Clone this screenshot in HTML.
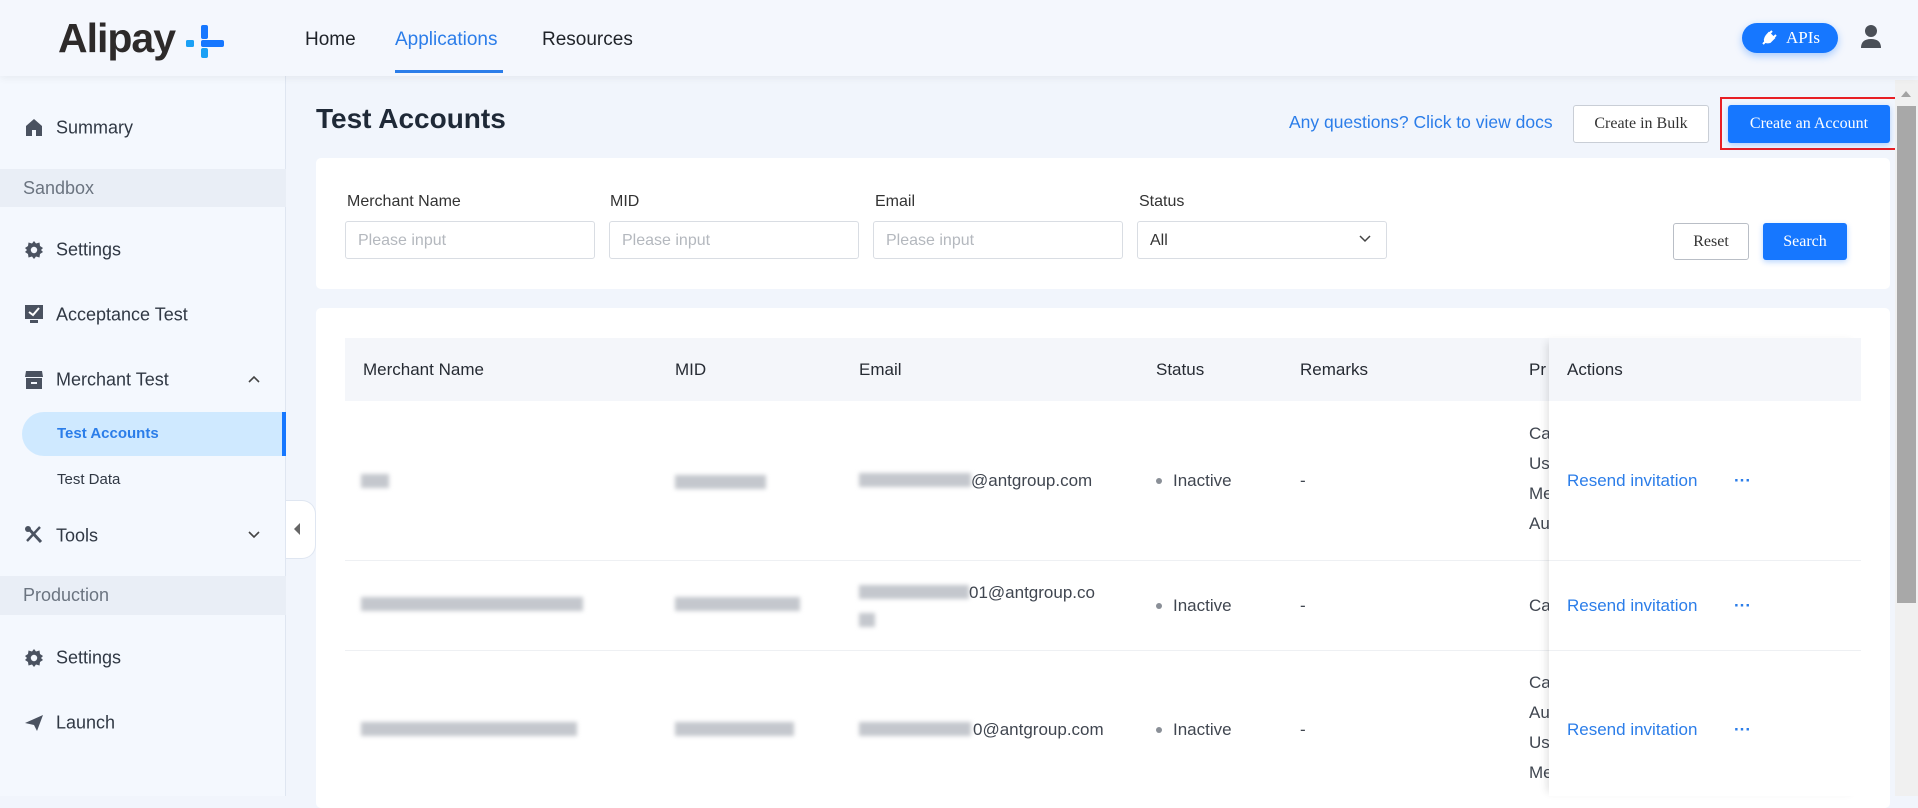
<!DOCTYPE html>
<html><head><meta charset="utf-8"><style>
*{box-sizing:border-box;margin:0;padding:0}
body{width:1918px;height:796px;overflow:hidden;background:#f1f5fc;font-family:"Liberation Sans",sans-serif;color:#262b33;position:relative}
.abs{position:absolute}
.hdr{left:0;top:0;width:1918px;height:76px;background:#f4f7fd;box-shadow:0 2px 8px rgba(0,0,0,.06);z-index:2}
.nav{top:29px;font-size:19px;color:#1f2329}
.side{left:0;top:76px;width:286px;height:720px;background:#f4f8fe;border-right:1px solid #dfe6f1}
.si{left:56px;font-size:18px;color:#303844;transform:translateY(-50%)}
.ic{left:24px;transform:translateY(-50%)}
.band{left:0;width:286px;background:#e9eef6;color:#6b7480;font-size:18px;padding-left:23px;display:flex;align-items:center}
.card{background:#fff;border-radius:5px}
.lbl{font-size:16px;color:#333;top:193px}
.inp{top:221px;height:38px;width:250px;border:1px solid #d9dde3;border-radius:3px;background:#fff;font-size:16px;color:#b4b8be;padding:10px 12px}
.btn{font-family:"Liberation Serif",serif;font-size:16px;display:flex;align-items:center;justify-content:center;border-radius:3px}
.th{top:360px;font-size:17px;color:#262b33}
.blur{background:#c4c7cd;filter:blur(2px);height:14px}
.td{font-size:17px;color:#404650;transform:translateY(-50%)}
.dot{width:6px;height:6px;border-radius:50%;background:#8a8f97}
.lk{color:#2b7de9;font-size:17px;transform:translateY(-50%)}
</style></head><body>
<div class="abs hdr">
  <div class="abs" style="left:58px;top:15px;font-size:41px;font-weight:bold;color:#2d2a2a;letter-spacing:-1px">Alipay</div>
  <svg class="abs" style="left:186px;top:24px" width="40" height="34" viewBox="0 0 40 34"><rect x="0" y="16" width="8" height="7" rx="1.5" fill="#1aa0f5"/><rect x="15" y="1" width="7" height="14" rx="2" fill="#1677ff"/><rect x="15" y="16" width="23" height="7" rx="2" fill="#1677ff"/><rect x="15" y="24" width="7" height="10" rx="2" fill="#1aa0f5"/></svg>
  <div class="abs nav" style="left:305px">Home</div>
  <div class="abs nav" style="left:395px;color:#2b7de9">Applications</div>
  <div class="abs" style="left:395px;top:70px;width:108px;height:3px;background:#2b7de9"></div>
  <div class="abs nav" style="left:542px">Resources</div>
  <div class="abs" style="left:1742px;top:23px;width:96px;height:30px;border-radius:15px;background:#1677ff;box-shadow:0 3px 8px rgba(22,119,255,.35);color:#fff;font-family:'Liberation Serif',serif;font-size:17px;display:flex;align-items:center;padding-left:44px">APIs</div>
  <svg class="abs" style="left:1760px;top:29px" width="18" height="18" viewBox="0 0 18 18"><path d="M3 15 L7 11 M9 4 L14 9 L10 13 Q6 14 5 12 Q4 9 9 4Z M12 2 L10 4 M16 6 L14 8" stroke="#fff" stroke-width="2" fill="#fff"/></svg>
  <svg class="abs" style="left:1860px;top:24px" width="22" height="26" viewBox="0 0 22 26"><circle cx="11" cy="7" r="6" fill="#4a4f57"/><path d="M1 24 Q1 15 11 15 Q21 15 21 24 Z" fill="#4a4f57"/></svg>
</div>

<div class="abs side"></div>
<svg class="abs ic" style="top:127px" width="20" height="20" viewBox="0 0 20 20"><path d="M2 9 L10 2 L18 9 V19 H12 V13 H8 V19 H2Z" fill="#4a5260"/></svg>
<div class="abs si" style="top:128px">Summary</div>
<div class="abs band" style="top:169px;height:38px">Sandbox</div>
<svg class="abs ic" style="top:250px" width="20" height="20" viewBox="0 0 20 20"><path d="M10 1 L12 3.5 L15.5 2.5 L16 6 L19 8 L17 10 L19 12 L16 14 L15.5 17.5 L12 16.5 L10 19 L8 16.5 L4.5 17.5 L4 14 L1 12 L3 10 L1 8 L4 6 L4.5 2.5 L8 3.5Z" fill="#4a5260"/><circle cx="10" cy="10" r="3.2" fill="#f4f8fe"/></svg>
<div class="abs si" style="top:250px">Settings</div>
<svg class="abs ic" style="top:314px" width="20" height="20" viewBox="0 0 20 20"><rect x="1" y="1" width="18" height="14" fill="#4a5260"/><path d="M5 8 L9 11 L15 4" stroke="#fff" stroke-width="2" fill="none"/><rect x="6" y="16" width="8" height="3" fill="#4a5260"/></svg>
<div class="abs si" style="top:315px">Acceptance Test</div>
<svg class="abs ic" style="top:380px" width="20" height="20" viewBox="0 0 20 20"><path d="M2 1 H18 L19 7 H1Z" fill="#4a5260"/><rect x="2" y="8" width="16" height="11" fill="#4a5260"/><rect x="7" y="12" width="6" height="2" fill="#f4f8fe"/></svg>
<div class="abs si" style="top:380px">Merchant Test</div>
<svg class="abs" style="left:247px;top:374px" width="14" height="10" viewBox="0 0 14 10"><path d="M2 8 L7 3 L12 8" stroke="#444" stroke-width="1.6" fill="none"/></svg>
<div class="abs" style="left:22px;top:412px;width:264px;height:44px;background:#cfe9ff;border-radius:22px 0 0 22px"></div>
<div class="abs" style="left:282px;top:412px;width:4px;height:44px;background:#1677ff"></div>
<div class="abs" style="left:57px;top:425px;font-size:15px;color:#2b7de9;font-weight:bold">Test Accounts</div>
<div class="abs" style="left:57px;top:471px;font-size:15px;color:#303844">Test Data</div>
<svg class="abs ic" style="top:535px" width="20" height="20" viewBox="0 0 20 20"><path d="M4 3 L17 17" stroke="#4a5260" stroke-width="3"/><path d="M16 2 L3 16" stroke="#4a5260" stroke-width="2.4"/><circle cx="4" cy="4" r="3" fill="#4a5260"/></svg>
<div class="abs si" style="top:536px">Tools</div>
<svg class="abs" style="left:247px;top:530px" width="14" height="10" viewBox="0 0 14 10"><path d="M2 2 L7 7 L12 2" stroke="#444" stroke-width="1.6" fill="none"/></svg>
<div class="abs band" style="top:576px;height:39px">Production</div>
<svg class="abs ic" style="top:658px" width="20" height="20" viewBox="0 0 20 20"><path d="M10 1 L12 3.5 L15.5 2.5 L16 6 L19 8 L17 10 L19 12 L16 14 L15.5 17.5 L12 16.5 L10 19 L8 16.5 L4.5 17.5 L4 14 L1 12 L3 10 L1 8 L4 6 L4.5 2.5 L8 3.5Z" fill="#4a5260"/><circle cx="10" cy="10" r="3.2" fill="#f4f8fe"/></svg>
<div class="abs si" style="top:658px">Settings</div>
<svg class="abs ic" style="top:723px" width="20" height="20" viewBox="0 0 20 20"><path d="M1 10 L19 2 L13 18 L10 12Z" fill="#4a5260"/></svg>
<div class="abs si" style="top:723px">Launch</div>
<div class="abs" style="left:286px;top:500px;width:30px;height:59px;background:#fff;border:1px solid #dfe6f1;border-left:none;border-radius:0 14px 14px 0"></div>
<svg class="abs" style="left:293px;top:522px" width="8" height="14" viewBox="0 0 8 14"><path d="M7 1 L1 7 L7 13Z" fill="#666"/></svg>

<div class="abs" style="left:316px;top:103px;font-size:28px;font-weight:bold;color:#1f2937">Test Accounts</div>
<div class="abs" style="left:1289px;top:112px;font-size:17.5px;color:#2b7de9">Any questions? Click to view docs</div>
<div class="abs btn" style="left:1573px;top:105px;width:136px;height:38px;background:#fff;border:1px solid #c9ced6;color:#333">Create in Bulk</div>
<div class="abs" style="left:1720px;top:97px;width:177px;height:53px;border:2px solid #e81f25"></div>
<div class="abs btn" style="left:1728px;top:105px;width:162px;height:38px;background:#1677ff;color:#fff;box-shadow:0 2px 6px rgba(22,119,255,.3)">Create an Account</div>

<div class="abs card" style="left:316px;top:158px;width:1574px;height:131px"></div>
<div class="abs lbl" style="left:347px">Merchant Name</div>
<div class="abs lbl" style="left:610px">MID</div>
<div class="abs lbl" style="left:875px">Email</div>
<div class="abs lbl" style="left:1139px">Status</div>
<div class="abs inp" style="left:345px">Please input</div>
<div class="abs inp" style="left:609px">Please input</div>
<div class="abs inp" style="left:873px">Please input</div>
<div class="abs inp" style="left:1137px;color:#333">All</div>
<svg class="abs" style="left:1359px;top:235px" width="12" height="8" viewBox="0 0 12 8"><path d="M1 1 L6 6 L11 1" stroke="#444" stroke-width="1.5" fill="none"/></svg>
<div class="abs btn" style="left:1673px;top:223px;width:76px;height:37px;background:#fff;border:1px solid #b9bec6;color:#333">Reset</div>
<div class="abs btn" style="left:1763px;top:223px;width:84px;height:37px;background:#1677ff;color:#fff;box-shadow:0 2px 6px rgba(22,119,255,.3)">Search</div>

<div class="abs card" style="left:316px;top:308px;width:1574px;height:500px"></div>
<div class="abs" style="left:345px;top:338px;width:1516px;height:63px;background:#f4f6fa"></div>
<div class="abs th" style="left:363px">Merchant Name</div>
<div class="abs th" style="left:675px">MID</div>
<div class="abs th" style="left:859px">Email</div>
<div class="abs th" style="left:1156px">Status</div>
<div class="abs th" style="left:1300px">Remarks</div>
<div class="abs th" style="left:1529px">Pr</div>
<div class="abs" style="left:345px;top:560px;width:1516px;height:1px;background:#eef0f3"></div>
<div class="abs" style="left:345px;top:650px;width:1516px;height:1px;background:#eef0f3"></div>

<div class="abs blur" style="left:361px;top:474px;width:28px"></div>
<div class="abs blur" style="left:675px;top:475px;width:91px"></div>
<div class="abs blur" style="left:859px;top:473px;width:112px"></div>
<div class="abs td" style="left:971px;top:481px">@antgroup.com</div>
<div class="abs dot" style="left:1156px;top:478px"></div>
<div class="abs td" style="left:1173px;top:481px">Inactive</div>
<div class="abs td" style="left:1300px;top:481px">-</div>
<div class="abs td" style="left:1529px;top:434px">Ca</div>
<div class="abs td" style="left:1529px;top:464px">Us</div>
<div class="abs td" style="left:1529px;top:494px">Me</div>
<div class="abs td" style="left:1529px;top:524px">Au</div>

<div class="abs blur" style="left:361px;top:597px;width:222px"></div>
<div class="abs blur" style="left:675px;top:597px;width:125px"></div>
<div class="abs blur" style="left:859px;top:585px;width:110px"></div>
<div class="abs td" style="left:969px;top:593px">01@antgroup.co</div>
<div class="abs blur" style="left:859px;top:613px;width:16px"></div>
<div class="abs dot" style="left:1156px;top:603px"></div>
<div class="abs td" style="left:1173px;top:606px">Inactive</div>
<div class="abs td" style="left:1300px;top:606px">-</div>
<div class="abs td" style="left:1529px;top:606px">Ca</div>

<div class="abs blur" style="left:361px;top:722px;width:216px"></div>
<div class="abs blur" style="left:675px;top:722px;width:119px"></div>
<div class="abs blur" style="left:859px;top:722px;width:112px"></div>
<div class="abs td" style="left:973px;top:730px">0@antgroup.com</div>
<div class="abs dot" style="left:1156px;top:727px"></div>
<div class="abs td" style="left:1173px;top:730px">Inactive</div>
<div class="abs td" style="left:1300px;top:730px">-</div>
<div class="abs td" style="left:1529px;top:683px">Ca</div>
<div class="abs td" style="left:1529px;top:713px">Au</div>
<div class="abs td" style="left:1529px;top:743px">Us</div>
<div class="abs td" style="left:1529px;top:773px">Me</div>

<div class="abs" style="left:1549px;top:338px;width:312px;height:458px;background:#fff;box-shadow:-6px 0 8px -4px rgba(0,0,0,.12)"></div>
<div class="abs" style="left:1549px;top:338px;width:312px;height:63px;background:#f4f6fa"></div>
<div class="abs" style="left:1549px;top:560px;width:312px;height:1px;background:#eef0f3"></div>
<div class="abs" style="left:1549px;top:650px;width:312px;height:1px;background:#eef0f3"></div>
<div class="abs th" style="left:1567px">Actions</div>
<div class="abs lk" style="left:1567px;top:481px">Resend invitation</div>
<div class="abs lk" style="left:1567px;top:606px">Resend invitation</div>
<div class="abs lk" style="left:1567px;top:730px">Resend invitation</div>
<div class="abs lk" style="left:1734px;top:481px;font-weight:bold">···</div>
<div class="abs lk" style="left:1734px;top:606px;font-weight:bold">···</div>
<div class="abs lk" style="left:1734px;top:730px;font-weight:bold">···</div>

<div class="abs" style="left:1895px;top:80px;width:23px;height:716px;background:#f0f0f0"></div>
<svg class="abs" style="left:1900px;top:90px" width="12" height="8" viewBox="0 0 12 8"><path d="M1 7 L6 1 L11 7Z" fill="#a3a3a3"/></svg>
<div class="abs" style="left:1897px;top:106px;width:19px;height:497px;background:#a8a8a8"></div>
</body></html>
